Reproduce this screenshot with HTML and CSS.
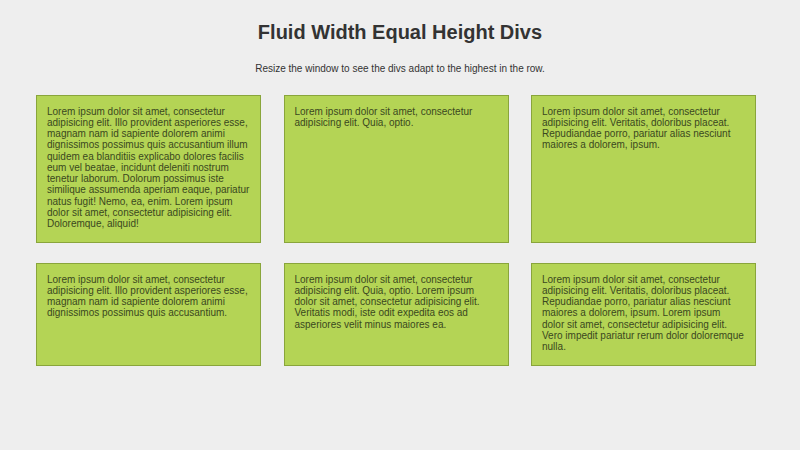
FILE: index.html
```html
<!DOCTYPE html>
<html lang="en">
<head>
  <meta charset="UTF-8">
  <meta name="viewport" content="width=device-width, initial-scale=1.0">
  <title>Fluid Width Equal Height Divs</title>
  <link rel="stylesheet" href="styles.css">
</head>
<body>
  <h1 class="title">Fluid Width Equal Height Divs</h1>
  <p class="intro">Resize the window to see the divs adapt to the highest in the row.</p>

  <!-- Each row stretches its boxes to the tallest one -->
  <div class="row">
    <div class="box">Lorem ipsum dolor sit amet, consectetur adipisicing elit. Illo provident asperiores esse, magnam nam id sapiente dolorem animi dignissimos possimus quis accusantium illum quidem ea blanditiis explicabo dolores facilis eum vel beatae, incidunt deleniti nostrum tenetur laborum. Dolorum possimus iste similique assumenda aperiam eaque, pariatur natus fugit! Nemo, ea, enim. Lorem ipsum dolor sit amet, consectetur adipisicing elit. Doloremque, aliquid!</div>
    <div class="box">Lorem ipsum dolor sit amet, consectetur adipisicing elit. Quia, optio.</div>
    <div class="box">Lorem ipsum dolor sit amet, consectetur adipisicing elit. Veritatis, doloribus placeat. Repudiandae porro, pariatur alias nesciunt maiores a dolorem, ipsum.</div>
  </div>

  <div class="row">
    <div class="box">Lorem ipsum dolor sit amet, consectetur adipisicing elit. Illo provident asperiores esse, magnam nam id sapiente dolorem animi dignissimos possimus quis accusantium.</div>
    <div class="box">Lorem ipsum dolor sit amet, consectetur adipisicing elit. Quia, optio. Lorem ipsum dolor sit amet, consectetur adipisicing elit. Veritatis modi, iste odit expedita eos ad asperiores velit minus maiores ea.</div>
    <div class="box">Lorem ipsum dolor sit amet, consectetur adipisicing elit. Veritatis, doloribus placeat. Repudiandae porro, pariatur alias nesciunt maiores a dolorem, ipsum. Lorem ipsum dolor sit amet, consectetur adipisicing elit. Vero impedit pariatur rerum dolor doloremque nulla.</div>
  </div>
</body>
</html>
```

FILE: styles.css
```css
/* Basic styling */
body {
  font-family: "Liberation Sans", Arial, sans-serif;
  margin: 0;
  padding: 0;
  background-color: #eeeeee;
  color: #333333;
}

.title {
  margin: 20px 0 0;
  font-size: 20px;
  line-height: 24px;
  text-align: center;
}

.intro {
  margin: 18px 0 0;
  font-size: 10px;
  line-height: 14px;
  text-align: center;
}

/* Rows of equal height boxes */
.row {
  display: flex;
  align-items: stretch;
  gap: 22.5px;
  width: 720px;
  margin: 19px 0 20px 36px;
}

.row + .row {
  margin-top: 0;
}

.box {
  flex: 1;
  box-sizing: border-box;
  padding: 9.5px 10px 12.75px;
  background: #b4d455;
  border: 1px solid #89a53b;
  color: #3a4820;
  font-size: 10px;
  line-height: 11.25px;
}
```
